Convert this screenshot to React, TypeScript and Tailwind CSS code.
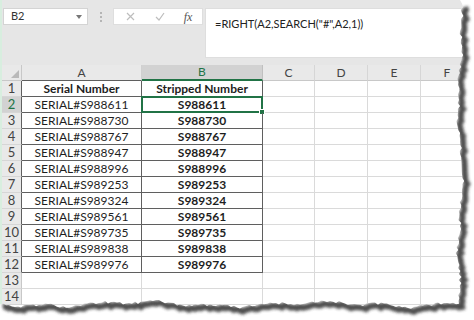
import { useMemo } from "react";

const data = [
  ["SERIAL#S988611", "S988611"],
  ["SERIAL#S988730", "S988730"],
  ["SERIAL#S988767", "S988767"],
  ["SERIAL#S988947", "S988947"],
  ["SERIAL#S988996", "S988996"],
  ["SERIAL#S989253", "S989253"],
  ["SERIAL#S989324", "S989324"],
  ["SERIAL#S989561", "S989561"],
  ["SERIAL#S989735", "S989735"],
  ["SERIAL#S989838", "S989838"],
  ["SERIAL#S989976", "S989976"],
];

const font = { fontFamily: "Lato, 'Open Sans', sans-serif" };

// torn paper edge, generated once from a fixed seed
function useTornEdge() {
  return useMemo(() => {
    let s = 17;
    const rnd = () => {
      s = (s * 9301 + 49297) % 233280;
      return s / 233280;
    };
    const pts: [number, number][] = [];
    for (let y = 4; y <= 302; y += 3) {
      const bump = Math.sin(y / 23) * 2 + Math.sin(y / 7) * 1.2;
      pts.push([460 + bump + (rnd() - 0.5) * 3, y]);
    }
    for (let x = 459; x >= 0; x -= 3) {
      const bump = Math.sin(x / 29) * 2 + Math.sin(x / 9) * 1.3;
      pts.push([x, 304 + bump + (rnd() - 0.5) * 3]);
    }
    const line = pts.map((p, i) => (i ? "L" : "M") + p[0].toFixed(1) + "," + p[1].toFixed(1)).join(" ");
    const outside = "M474,0 L460,0 " + line.replace(/^M/, "L") + " L0,320 L474,320 Z";
    return { line, outside };
  }, []);
}

function CornerCell() {
  return (
    <div className="relative h-[16px] bg-[#e9e9e9] border-r border-b border-[#c8c8c8]">
      <svg className="absolute right-[2px] bottom-[2px]" width="8" height="8" viewBox="0 0 8 8">
        <path d="M8 0 L8 8 L0 8 Z" fill="#b9b9b9" />
      </svg>
    </div>
  );
}

export default function App() {
  const torn = useTornEdge();
  const cols = ["A", "B", "C", "D", "E", "F"];

  return (
    <div className="relative w-[474px] h-[320px] overflow-hidden bg-white flex" style={font}>
      <div className="w-[2px] h-full bg-[#d8eedf]" />
      <div className="flex-1 flex flex-col">
        {/* formula bar */}
        <div className="h-[65px] bg-[#e6e6e6] flex items-start pt-[8px] pl-[1px]">
          <div className="w-[85px] h-[17px] bg-white border border-[#d4d4d4] flex items-center justify-between pl-[7px] pr-[5px]">
            <span className="text-[11px] text-[#333]">B2</span>
            <svg width="6" height="4" viewBox="0 0 6 4">
              <path d="M0 0 L6 0 L3 4 Z" fill="#777" />
            </svg>
          </div>
          <div className="w-[25px] h-[17px] flex flex-col items-center justify-center gap-[2px]">
            <div className="w-[2px] h-[2px] bg-[#b5b5b5]" />
            <div className="w-[2px] h-[2px] bg-[#b5b5b5]" />
            <div className="w-[2px] h-[2px] bg-[#b5b5b5]" />
          </div>
          <div className="w-[90px] h-[17px] bg-white border border-[#dedede] flex items-center">
            <div className="w-[32px] flex justify-center">
              <svg width="9" height="9" viewBox="0 0 9 9">
                <path d="M1 1 L8 8 M8 1 L1 8" stroke="#bdbdbd" strokeWidth="1.2" fill="none" />
              </svg>
            </div>
            <div className="w-[28px] flex justify-center">
              <svg width="10" height="9" viewBox="0 0 10 9">
                <path d="M1 5 L4 8 L9 1" stroke="#bdbdbd" strokeWidth="1.2" fill="none" />
              </svg>
            </div>
            <div className="flex-1 flex justify-center">
              <span className="italic text-[12px] text-[#555]" style={{ fontFamily: "'Liberation Serif', serif" }}>
                fx
              </span>
            </div>
          </div>
          <div className="ml-[2px] w-[265px] h-[50px] bg-white border border-[#dedede] pl-[9px] pt-[1px]">
            <span className="text-[11px] text-[#222]">=RIGHT(A2,SEARCH("#",A2,1))</span>
          </div>
        </div>

        {/* sheet */}
        <div className="grid grid-cols-[20px_120px_121px_52px_53px_53px_1fr] text-[12px]">
          <CornerCell />
          {cols.map((c) => (
            <div
              key={c}
              className={
                c === "B"
                  ? "h-[16px] flex items-center justify-center bg-[#d2d2d2] text-[#217346] border-r border-[#c0c0c0] border-b-2 border-b-[#217346]"
                  : c === "A"
                  ? "h-[16px] flex items-center justify-center bg-[#e9e9e9] text-[#444] border-r border-[#d0d0d0] border-b border-b-[#5f5f5f]"
                  : "h-[16px] flex items-center justify-center bg-[#e9e9e9] text-[#444] border-r border-[#d6d6d6] border-b border-b-[#c8c8c8]"
              }
            >
              {c}
            </div>
          ))}

          {Array.from({ length: 14 }, (_, i) => {
            const r = i + 1;
            const inTable = r <= 12;
            const active = r === 2;
            const rowCells =
              r === 1
                ? ["Serial Number", "Stripped Number"]
                : inTable
                ? data[r - 2]
                : ["", ""];
            return [
              <div
                key={"h" + r}
                className={
                  (active ? "bg-[#d2d2d2] text-[#217346] " : "bg-[#e9e9e9] text-[#444] ") +
                  (inTable ? "border-r-[#5f5f5f] " : "border-r-[#c8c8c8] ") +
                  "h-[16px] flex items-center justify-center border-r border-b border-b-[#d6d6d6] text-[13px]"
                }
              >
                {r}
              </div>,
              <div
                key={"a" + r}
                className={
                  (inTable ? "border-[#5f5f5f] " : "border-[#dadada] ") +
                  (r === 1 ? "font-bold " : "") +
                  "h-[16px] flex items-center justify-center border-r border-b text-[#1e1e1e]"
                }
              >
                {rowCells[0]}
              </div>,
              <div
                key={"b" + r}
                className={
                  (inTable ? "border-[#5f5f5f] " : "border-[#dadada] ") +
                  "relative h-[16px] flex items-center justify-center border-r border-b font-bold text-[#1e1e1e]"
                }
              >
                {rowCells[1]}
                {active && (
                  <div className="absolute -left-[1px] -top-[1px] -right-[1px] -bottom-[1px] border-2 border-[#217346]">
                    <div className="absolute -right-[4px] -bottom-[4px] w-[6px] h-[6px] bg-[#217346] border border-white" />
                  </div>
                )}
              </div>,
              ...[0, 1, 2, 3].map((k) => (
                <div key={"x" + r + k} className="h-[16px] border-r border-b border-[#dadada]" />
              )),
            ];
          })}
        </div>
      </div>

      {/* torn paper edge */}
      <svg className="absolute inset-0 pointer-events-none" width="474" height="320" viewBox="0 0 474 320">
        <defs>
          <clipPath id="out">
            <path d={torn.outside} />
          </clipPath>
          <filter id="blur" x="-5%" y="-5%" width="110%" height="110%">
            <feGaussianBlur stdDeviation="1.8" />
          </filter>
        </defs>
        <path d={torn.outside} fill="#ffffff" />
        <g clipPath="url(#out)">
          <path
            d={torn.line}
            transform="translate(3 3)"
            stroke="#2e2e2e"
            strokeWidth="6"
            fill="none"
            filter="url(#blur)"
            opacity="0.85"
          />
        </g>
      </svg>
    </div>
  );
}
